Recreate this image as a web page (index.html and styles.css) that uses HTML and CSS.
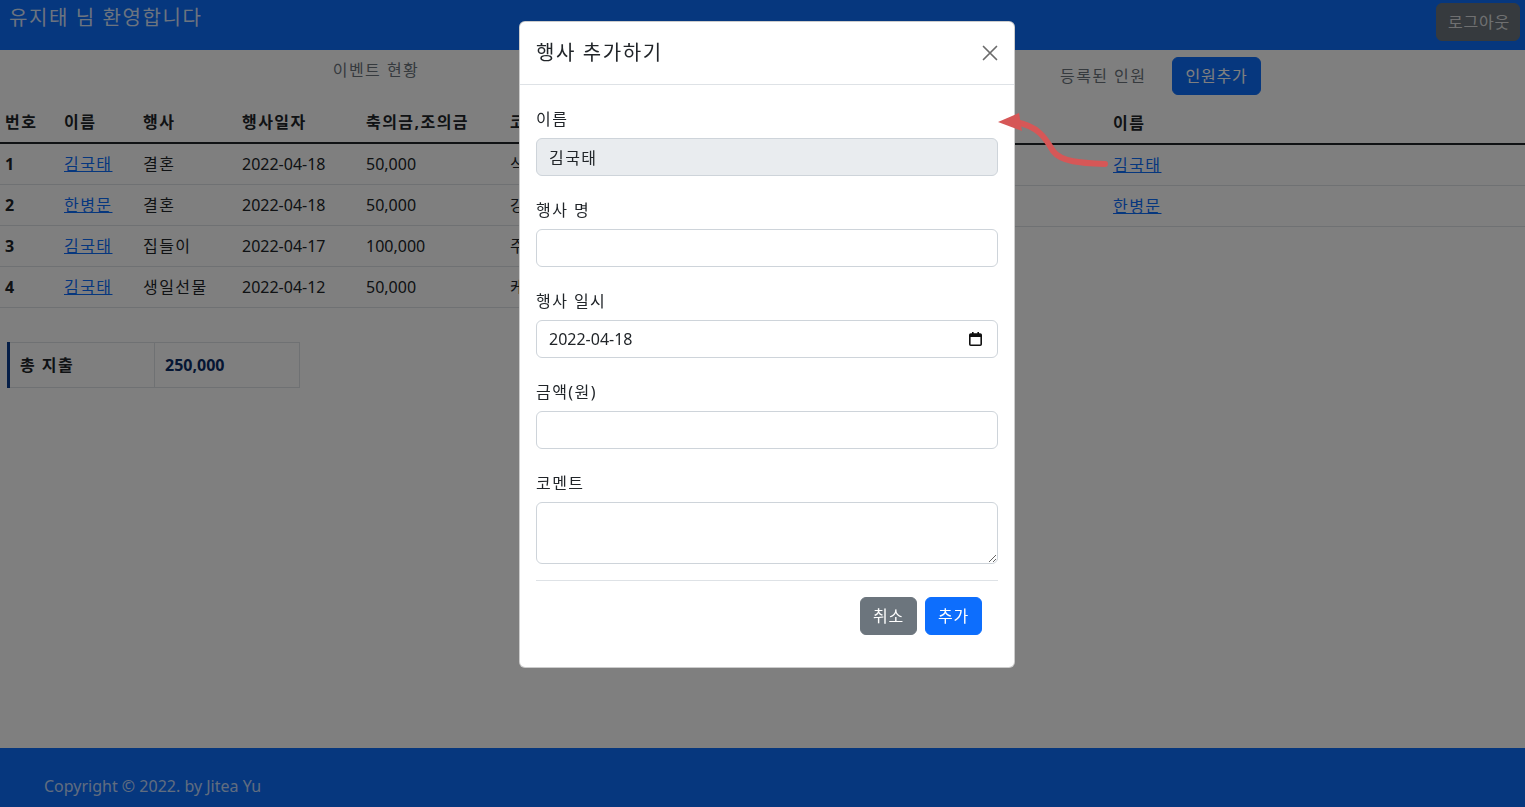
FILE: index.html
```html
<!DOCTYPE html>
<html lang="ko">
<head>
<meta charset="utf-8">
<title>행사 관리</title>
<link rel="stylesheet" href="styles.css">
</head>
<body>
<header class="navbar">
  <div class="brand">유지태 님 환영합니다</div>
  <button class="btn btn-secondary btn-logout" type="button">로그아웃</button>
</header>

<main class="main">
  <section class="col col-events">
    <h2 class="col-title">이벤트 현황</h2>
    <table class="table events-table">
      <colgroup>
        <col class="w-no"><col class="w-name"><col class="w-event"><col class="w-date"><col class="w-amount"><col>
      </colgroup>
      <thead>
        <tr><th class="first">번호</th><th>이름</th><th>행사</th><th>행사일자</th><th>축의금,조의금</th><th>코멘트</th></tr>
      </thead>
      <tbody>
        <tr><td class="first strong">1</td><td class="ko"><a href="#">김국태</a></td><td class="ko">결혼</td><td>2022-04-18</td><td>50,000</td><td class="ko">식장 참석</td></tr>
        <tr><td class="first strong">2</td><td class="ko"><a href="#">한병문</a></td><td class="ko">결혼</td><td>2022-04-18</td><td>50,000</td><td class="ko">강남 예식장</td></tr>
        <tr><td class="first strong">3</td><td class="ko"><a href="#">김국태</a></td><td class="ko">집들이</td><td>2022-04-17</td><td>100,000</td><td class="ko">주말 방문</td></tr>
        <tr><td class="first strong">4</td><td class="ko"><a href="#">김국태</a></td><td class="ko">생일선물</td><td>2022-04-12</td><td>50,000</td><td class="ko">케이크</td></tr>
      </tbody>
    </table>

    <table class="summary">
      <tr><th class="sum-label">총 지출</th><td class="sum-value">250,000</td></tr>
    </table>
  </section>

  <section class="col col-people">
    <div class="people-head">
      <span class="people-title">등록된 인원</span>
      <button class="btn btn-primary" type="button">인원추가</button>
    </div>
    <table class="table people-table">
      <colgroup><col class="w-pno"><col></colgroup>
      <thead><tr><th>번호</th><th>이름</th></tr></thead>
      <tbody>
        <tr><td class="strong">1</td><td class="ko"><a href="#">김국태</a></td></tr>
        <tr><td class="strong">2</td><td class="ko"><a href="#">한병문</a></td></tr>
      </tbody>
    </table>
  </section>
</main>

<footer class="footer">
  <p class="copy">Copyright © 2022. by Jitea Yu</p>
</footer>

<div class="backdrop"></div>

<div class="modal" role="dialog">
  <div class="modal-header">
    <h3 class="modal-title">행사 추가하기</h3>
    <button class="btn-close" type="button" aria-label="닫기">
      <svg width="16" height="16" viewBox="0 0 16 16"><path d="M1.5 1.5L14.5 14.5M14.5 1.5L1.5 14.5" stroke="#6b6b6b" stroke-width="1.7" stroke-linecap="round" fill="none"/></svg>
    </button>
  </div>
  <div class="modal-body">
    <div class="group">
      <label class="form-label">이름</label>
      <input class="form-control ko" type="text" value="김국태" disabled>
    </div>
    <div class="group">
      <label class="form-label">행사 명</label>
      <input class="form-control" type="text">
    </div>
    <div class="group">
      <label class="form-label">행사 일시</label>
      <div class="form-control date-control">
        <input class="date-input" type="text" value="2022-04-18">
        <svg class="cal-icon" width="13" height="14" viewBox="0 0 13 14">
          <rect x="3" y="0" width="1.6" height="3" fill="#111"/>
          <rect x="8.4" y="0" width="1.6" height="3" fill="#111"/>
          <rect x="0.8" y="2" width="11.4" height="11.2" rx="1" fill="none" stroke="#111" stroke-width="1.6"/>
          <rect x="0.8" y="2" width="11.4" height="3" fill="#111"/>
        </svg>
      </div>
    </div>
    <div class="group">
      <label class="form-label">금액(원)</label>
      <input class="form-control" type="text">
    </div>
    <div class="group last">
      <label class="form-label">코멘트</label>
      <textarea class="form-control textarea" rows="2"></textarea>
    </div>
    <hr class="divider">
    <div class="actions">
      <button class="btn btn-secondary" type="button">취소</button>
      <button class="btn btn-primary" type="button">추가</button>
    </div>
  </div>
</div>

<svg class="arrow" width="115" height="62" viewBox="0 0 115 62">
  <path d="M110 56 C 86 55, 66 54, 58 43 C 51 31, 44 18, 20 14" fill="none" stroke="#d65757" stroke-width="6" stroke-linecap="round"/>
  <polygon points="3,14 24,5 27,23" fill="#d65757"/>
</svg>
</body>
</html>
```

FILE: styles.css
```css
* { box-sizing: border-box; }

html, body {
  margin: 0;
  padding: 0;
}

body {
  font-family: "Noto Sans", "Noto Sans CJK KR", sans-serif;
  font-size: 16px;
  line-height: 24px;
  color: #212529;
  background: #fff;
  overflow: hidden;
}

/* Korean text is set a little wider, as in the original UI font */
.ko,
.brand,
.col-title,
.table th,
.sum-label,
.people-title,
.modal-title,
.form-label {
  letter-spacing: 0.09em;
}

.btn { letter-spacing: 0.05em; }

/* ---------- header ---------- */
.navbar {
  height: 50px;
  background: #0d6efd;
  display: flex;
  justify-content: space-between;
  align-items: flex-start;
}

.brand {
  padding: 3px 0 0 9px;
  font-size: 20px;
  line-height: 30px;
  letter-spacing: 0.08em;
  color: rgba(255, 255, 255, 0.85);
}

.btn {
  font-family: inherit;
  font-size: 16px;
  line-height: 24px;
  padding: 6px 12px;
  border: 1px solid transparent;
  border-radius: 6px;
  color: #fff;
  cursor: pointer;
}

.btn-primary { background: #0d6efd; border-color: #0d6efd; }
.btn-secondary { background: #6c757d; border-color: #6c757d; }

.btn-logout {
  margin: 3px 5px 0 0;
  padding: 6px 9px 6px 11px;
  color: rgba(255, 255, 255, 0.8);
}

/* ---------- main ---------- */
.main {
  height: 698px;
  display: flex;
}

.col-events { width: 752px; flex: none; }
.col-people { flex: 1; }

.col-title {
  margin: 8px 0 0;
  text-align: center;
  font-size: 16px;
  line-height: 24px;
  font-weight: 400;
  color: #6c757d;
}

.table {
  width: 100%;
  border-collapse: collapse;
  table-layout: fixed;
}

.table th,
.table td {
  padding: 8px;
  text-align: left;
  white-space: nowrap;
  overflow: hidden;
  border-bottom: 1px solid #dee2e6;
}

.table th { font-weight: 700; }

.table thead tr th { border-bottom: 2px solid #212529; }

.table .first { padding-left: 5px; }

.strong { font-weight: 700; }

.table a { color: #0d6efd; text-decoration: underline; }

.events-table { margin-top: 20px; }
.w-no { width: 56px; }
.w-name { width: 79px; }
.w-event { width: 99px; }
.w-date { width: 124px; }
.w-amount { width: 144px; }

.people-head {
  display: flex;
  align-items: center;
  gap: 26px;
  padding: 7px 0 0 308px;
}

.people-title { color: #6c757d; }

.people-table { margin-top: 8px; }
.w-pno { width: 353px; }

.summary {
  margin: 34px 0 0 7px;
  width: 293px;
  border-collapse: collapse;
  border: 1px solid #dee2e6;
  border-left: 3px solid #0a3d8f;
}

.summary th,
.summary td {
  padding: 10px 12px;
  text-align: left;
  font-weight: 700;
  border: 1px solid #dee2e6;
}

.summary .sum-label { width: 146px; padding-left: 10px; }
.summary .sum-value { color: #0a2c66; padding-left: 10px; }

/* ---------- footer ---------- */
.footer {
  background: #0d6efd;
  height: 76px;
  padding: 26px 44px;
}

.copy {
  margin: 0;
  font-size: 16px;
  color: rgba(255, 255, 255, 0.75);
}

/* ---------- modal ---------- */
.backdrop {
  position: fixed;
  inset: 0;
  background: rgba(0, 0, 0, 0.5);
  z-index: 10;
}

.modal {
  position: fixed;
  left: 519px;
  top: 21px;
  width: 496px;
  background: #fff;
  border: 1px solid rgba(0, 0, 0, 0.2);
  border-radius: 6px;
  z-index: 20;
}

.modal-header {
  display: flex;
  justify-content: space-between;
  align-items: center;
  padding: 16px;
  border-bottom: 1px solid #dee2e6;
}

.modal-title {
  margin: 0;
  font-size: 20px;
  line-height: 30px;
  letter-spacing: 0.08em;
  font-weight: 400;
}

.btn-close {
  background: none;
  border: 0;
  padding: 0;
  width: 16px;
  height: 16px;
  display: flex;
  cursor: pointer;
}

.modal-body {
  padding: 22px 16px 32px;
}

.group {
  display: flex;
  flex-direction: column;
  margin-bottom: 22px;
}

.group.last { margin-bottom: 0; }

.form-label {
  margin-bottom: 7px;
}

.form-control {
  display: block;
  width: 100%;
  height: 38px;
  padding: 6px 12px;
  font-family: inherit;
  font-size: 16px;
  line-height: 24px;
  color: #212529;
  background: #fff;
  border: 1px solid #ced4da;
  border-radius: 6px;
}

.form-control:disabled {
  background: #e9ecef;
  opacity: 1;
}

.date-control {
  display: flex;
  align-items: center;
  gap: 8px;
  padding-right: 15px;
}

.date-input {
  flex: 1;
  min-width: 0;
  border: 0;
  padding: 0;
  font-family: inherit;
  font-size: 16px;
  line-height: 24px;
  color: #212529;
  background: transparent;
  outline: none;
}

.cal-icon { flex: none; }

.textarea {
  height: 62px;
  resize: vertical;
}

.divider {
  margin: 16px 0;
  border: 0;
  border-top: 1px solid #dee2e6;
}

.actions {
  display: flex;
  justify-content: flex-end;
  gap: 8px;
  padding-right: 16px;
}

.arrow {
  position: fixed;
  left: 995px;
  top: 108px;
  z-index: 30;
}
```
